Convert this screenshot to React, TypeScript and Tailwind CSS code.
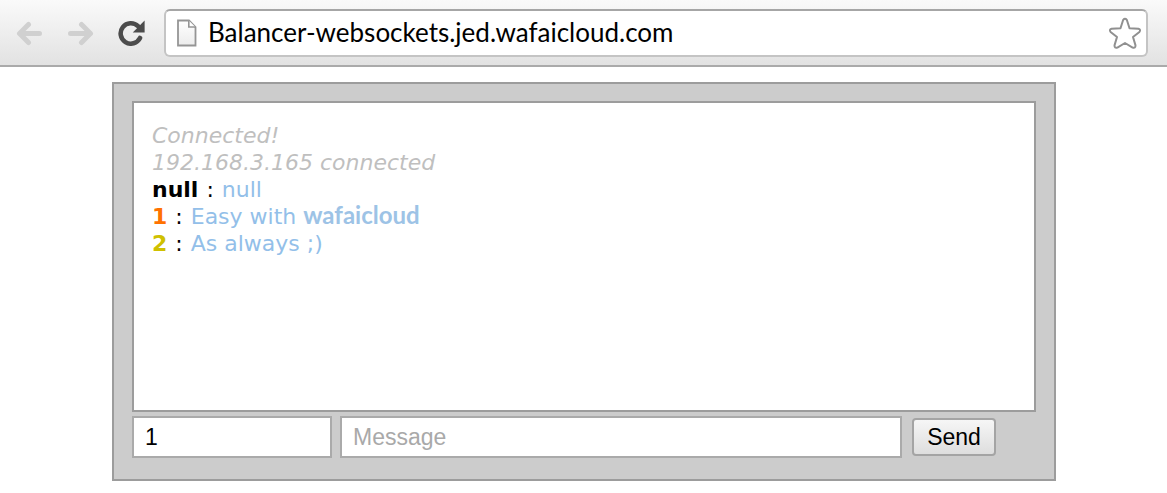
import { useState } from "react";
import type { FormEvent } from "react";

function BackIcon() {
  return (
    <svg width="28" height="26" viewBox="0 0 28 26" fill="none" stroke="#d0d0d0" strokeWidth="5" strokeLinecap="round" strokeLinejoin="round" aria-hidden="true">
      <path d="M24.500 13.500H5M13.500 4.500L4.500 13.500l9 9" />
    </svg>
  );
}

function ForwardIcon() {
  return (
    <svg width="28" height="26" viewBox="0 0 28 26" fill="none" stroke="#d0d0d0" strokeWidth="5" strokeLinecap="round" strokeLinejoin="round" aria-hidden="true">
      <path d="M4.500 13.500H24M15.500 4.500L24.500 13.500l-9 9" />
    </svg>
  );
}

function ReloadIcon() {
  return (
    <svg width="28" height="26" viewBox="0 0 28 26" aria-hidden="true">
      <path d="M23 18A10.200 10.200 0 1 1 21 6.200" fill="none" stroke="#4c4c4c" strokeWidth="4.600" strokeLinecap="round" />
      <path d="M27.600 0.500v12H15.800z" fill="#4c4c4c" />
    </svg>
  );
}

function PageIcon() {
  return (
    <svg width="22" height="30" viewBox="0 0 22 30" className="shrink-0" aria-hidden="true">
      <defs>
        <linearGradient id="sheet" x1="0" y1="0" x2="0" y2="1">
          <stop offset="0" stopColor="#fff" />
          <stop offset="1" stopColor="#ececec" />
        </linearGradient>
      </defs>
      <path d="M2 2.500h11l6.500 6.500v18.500H2z" fill="url(#sheet)" stroke="#959595" strokeWidth="1.800" />
      <path d="M12.800 2.500v6.500h6.500" fill="#fff" stroke="#959595" strokeWidth="1.600" />
    </svg>
  );
}

function StarIcon() {
  return (
    <svg width="34" height="34" viewBox="0 0 34 34" fill="#fff" stroke="#909090" strokeWidth="2" strokeLinejoin="round" aria-hidden="true">
      <path d="M15.200 3.800Q17 1.600 18.800 3.800L21.500 12.300L30.400 12.800Q33.200 13.700 31.400 16L25 21L27.500 29.400Q27.600 32.600 24.600 31.600L17 27L9.400 31.600Q6.400 32.600 6.500 29.400L9 21L2.600 16Q0.800 13.700 3.600 12.800L12.500 12.300Z" />
    </svg>
  );
}

function Toolbar() {
  return (
    <header className="flex items-center border-b-2 border-[#aaa] bg-linear-to-b from-[#fafafa] to-[#e2e2e2] pt-[9px] pr-[19px] pb-2 pl-[15px]">
      <nav aria-label="Browser" className="flex shrink-0 gap-[23px]">
        <button type="button" aria-label="Back"><BackIcon /></button>
        <button type="button" aria-label="Forward"><ForwardIcon /></button>
        <button type="button" aria-label="Reload"><ReloadIcon /></button>
      </nav>
      <div className="ml-[19px] flex h-12 min-w-0 flex-1 items-center rounded-md border-2 border-[#c4c4c4] border-t-[#a6a6a6] bg-white pr-1 pl-2.5">
        <PageIcon />
        <input
          aria-label="Address"
          defaultValue="Balancer-websockets.jed.wafaicloud.com"
          className="ml-2.5 min-w-0 flex-1 bg-transparent pb-0.5 font-['Lato',sans-serif] text-[26px] leading-8 text-black outline-none"
        />
        <button type="button" aria-label="Bookmark" className="shrink-0"><StarIcon /></button>
      </div>
    </header>
  );
}

type Entry = { name: string; color: string; text: string; strong?: string };

const initialEntries: Entry[] = [
  { name: "null", color: "text-black", text: "null" },
  { name: "1", color: "text-[#ff7200]", text: "Easy with ", strong: "wafaicloud" },
  { name: "2", color: "text-[#cfc000]", text: "As always ;)" },
];

export default function App() {
  const [entries, setEntries] = useState(initialEntries);
  const [name, setName] = useState("1");
  const [message, setMessage] = useState("");

  function send(event: FormEvent) {
    event.preventDefault();
    if (!message) return;
    setEntries([...entries, { name, color: "text-[#ff7200]", text: message }]);
    setMessage("");
  }

  return (
    <div className="min-h-screen bg-white">
      <Toolbar />
      <main className="mt-[15px] mr-[111px] ml-28 border-2 border-[#9c9c9c] bg-[#ccc] px-[18px] pt-[17px] pb-[21px]">
        <div role="log" className="h-[311px] overflow-y-auto border-2 border-[#9c9c9c] bg-white px-[18px] py-[19px] font-['DejaVu_Sans',sans-serif] text-[22px] leading-[27px] text-black">
          <p className="text-[#bfbfbf] italic">Connected!</p>
          <p className="text-[#bfbfbf] italic">192.168.3.165 connected</p>
          {entries.map((entry, index) => (
            <p key={index}>
              <b className={entry.color}>{entry.name}</b> <span className="mx-px">:</span>{" "}
              <span className="text-[#93bfe9]">
                {entry.text}
                {entry.strong && <b className="font-['Lato',sans-serif] text-2xl leading-none text-[#9dc3e6]">{entry.strong}</b>}
              </span>
            </p>
          ))}
        </div>
        <form onSubmit={send} className="mt-1 flex items-center pr-10 font-['Liberation_Sans',sans-serif] text-[23px] leading-7 text-black">
          <input
            aria-label="Name"
            value={name}
            onChange={(event) => setName(event.target.value)}
            className="h-[42px] w-[200px] min-w-0 border-2 border-[#aaa] bg-white px-[11px] outline-none"
          />
          <input
            aria-label="Message"
            placeholder="Message"
            value={message}
            onChange={(event) => setMessage(event.target.value)}
            className="ml-2 h-[42px] min-w-0 flex-1 border-2 border-[#aaa] bg-white px-[11px] outline-none placeholder:text-[#a9a9a9]"
          />
          <button type="submit" className="ml-2.5 h-[38px] w-[84px] shrink-0 rounded-sm border-2 border-[#a4a4a4] bg-linear-to-b from-[#f6f6f6] to-[#dedede]">
            Send
          </button>
        </form>
      </main>
    </div>
  );
}
